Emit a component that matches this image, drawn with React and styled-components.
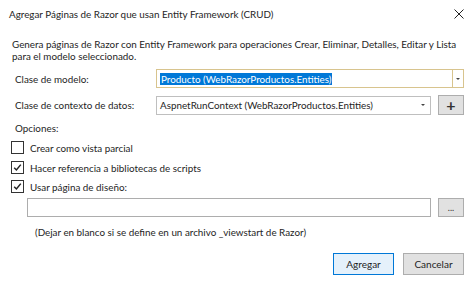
import React from "react";
import styled, { createGlobalStyle } from "styled-components";

const Global = createGlobalStyle`
  html, body { margin: 0; padding: 0; background: #fff; }
  body { font-family: Lato, "Noto Sans", sans-serif; font-size: 9.85px; color: #1e1e1e; }
  * { box-sizing: border-box; }
`;

const Dialog = styled.div`
  width: 474px;
  height: 283px;
  background: #fff;
  display: flex;
  flex-direction: column;
  overflow: hidden;
`;

const TitleBar = styled.div`
  height: 27px;
  display: flex;
  align-items: center;
  justify-content: space-between;
  padding: 0 10px 0 9px;
  white-space: nowrap;
`;

const CloseIcon = styled.svg`
  width: 10px;
  height: 10px;
  stroke: #222;
  stroke-width: 1;
`;

const Body = styled.div`
  display: flex;
  flex-direction: column;
  padding: 11px 10px 0 11px;
  white-space: nowrap;
`;

const Description = styled.p`
  margin: 0 0 4px 1px;
  line-height: 12px;
`;

const FormRow = styled.div`
  display: grid;
  grid-template-columns: 138px 1fr auto;
  align-items: center;
  gap: 7px;
  margin-top: ${(p) => p.$mt || 0}px;
`;

const Label = styled.span`
  padding-left: 4px;
`;

const Combo = styled.div`
  grid-column: ${(p) => (p.$wide ? "2 / 4" : "2 / 3")};
  height: 19px;
  border: 1px solid ${(p) => (p.$focused ? "#d8c48e" : "#bfbfbf")};
  display: flex;
  align-items: center;
  background: #fff;
`;

const ComboText = styled.div`
  flex: 1;
  padding-left: 3px;
  overflow: hidden;
`;

const Selected = styled.span`
  background: #0078d7;
  color: #fff;
  padding: 1px 1px;
`;

const Arrow = styled.div`
  width: ${(p) => (p.$sep ? 11 : 14)}px;
  height: 100%;
  display: flex;
  align-items: center;
  justify-content: center;
  border-left: ${(p) => (p.$sep ? "1px solid #d8c48e" : "none")};
  &::after {
    content: "";
    border-left: 2px solid transparent;
    border-right: 2px solid transparent;
    border-top: 2px solid #444;
  }
`;

const SquareButton = styled.button`
  width: 26px;
  height: ${(p) => p.$h || 20}px;
  background: #e1e1e1;
  border: 1px solid #adadad;
  padding: 0;
  font-family: inherit;
  font-size: ${(p) => (p.$plus ? 16 : 9)}px;
  font-weight: ${(p) => (p.$plus ? 700 : 400)};
  color: #333;
  display: flex;
  align-items: center;
  justify-content: center;
  line-height: 1;
`;

const SectionLabel = styled.div`
  margin: 7px 0 7px 4px;
`;

const CheckRow = styled.label`
  display: flex;
  align-items: center;
  gap: 6px;
  height: 13px;
  margin-bottom: ${(p) => p.$mb ?? 5}px;
`;

const Box = styled.span`
  width: 13px;
  height: 13px;
  border: 1px solid #333;
  background: #fff;
  display: flex;
  align-items: center;
  justify-content: center;
`;

const PathRow = styled.div`
  display: flex;
  align-items: center;
  gap: 7px;
  padding-left: 16px;
  margin-top: 5px;
`;

const TextInput = styled.div`
  flex: 1;
  height: 19px;
  border: 1px solid #adadad;
  background: #fff;
`;

const Hint = styled.div`
  margin: 9px 0 0 24px;
`;

const Footer = styled.div`
  display: flex;
  justify-content: flex-end;
  gap: 9px;
  margin-top: 15px;
`;

const DialogButton = styled.button`
  width: 61px;
  height: 22px;
  font-family: inherit;
  font-size: 10px;
  color: #1e1e1e;
  background: ${(p) => (p.$primary ? "#e5f1fb" : "#e1e1e1")};
  border: 1px solid ${(p) => (p.$primary ? "#0078d7" : "#adadad")};
  padding: 0;
`;

const Check = () => (
  <svg width="9" height="9" viewBox="0 0 9 9">
    <path d="M1.2 4.8 L3.4 7 L7.8 1.6" fill="none" stroke="#222" strokeWidth="1.5" />
  </svg>
);

export default function App() {
  return (
    <>
      <Global />
      <Dialog>
        <TitleBar>
          <span>Agregar Páginas de Razor que usan Entity Framework (CRUD)</span>
          <CloseIcon viewBox="0 0 10 10">
            <path d="M0.5 0.5 L9.5 9.5 M9.5 0.5 L0.5 9.5" />
          </CloseIcon>
        </TitleBar>
        <Body>
          <Description>
            Genera páginas de Razor con Entity Framework para operaciones Crear, Eliminar, Detalles, Editar y Lista
            <br />
            para el modelo seleccionado.
          </Description>
          <FormRow $mt={3}>
            <Label>Clase de modelo:</Label>
            <Combo $wide $focused>
              <ComboText>
                <Selected>Producto (WebRazorProductos.Entities)</Selected>
              </ComboText>
              <Arrow $sep />
            </Combo>
          </FormRow>
          <FormRow $mt={7}>
            <Label>Clase de contexto de datos:</Label>
            <Combo>
              <ComboText>AspnetRunContext (WebRazorProductos.Entities)</ComboText>
              <Arrow />
            </Combo>
            <SquareButton $plus>+</SquareButton>
          </FormRow>
          <SectionLabel>Opciones:</SectionLabel>
          <CheckRow $mb={7}>
            <Box />
            Crear como vista parcial
          </CheckRow>
          <CheckRow $mb={6}>
            <Box>
              <Check />
            </Box>
            Hacer referencia a bibliotecas de scripts
          </CheckRow>
          <CheckRow $mb={0}>
            <Box>
              <Check />
            </Box>
            Usar página de diseño:
          </CheckRow>
          <PathRow>
            <TextInput />
            <SquareButton $h={19}>...</SquareButton>
          </PathRow>
          <Hint>(Dejar en blanco si se define en un archivo _viewstart de Razor)</Hint>
          <Footer>
            <DialogButton $primary>Agregar</DialogButton>
            <DialogButton>Cancelar</DialogButton>
          </Footer>
        </Body>
      </Dialog>
    </>
  );
}
